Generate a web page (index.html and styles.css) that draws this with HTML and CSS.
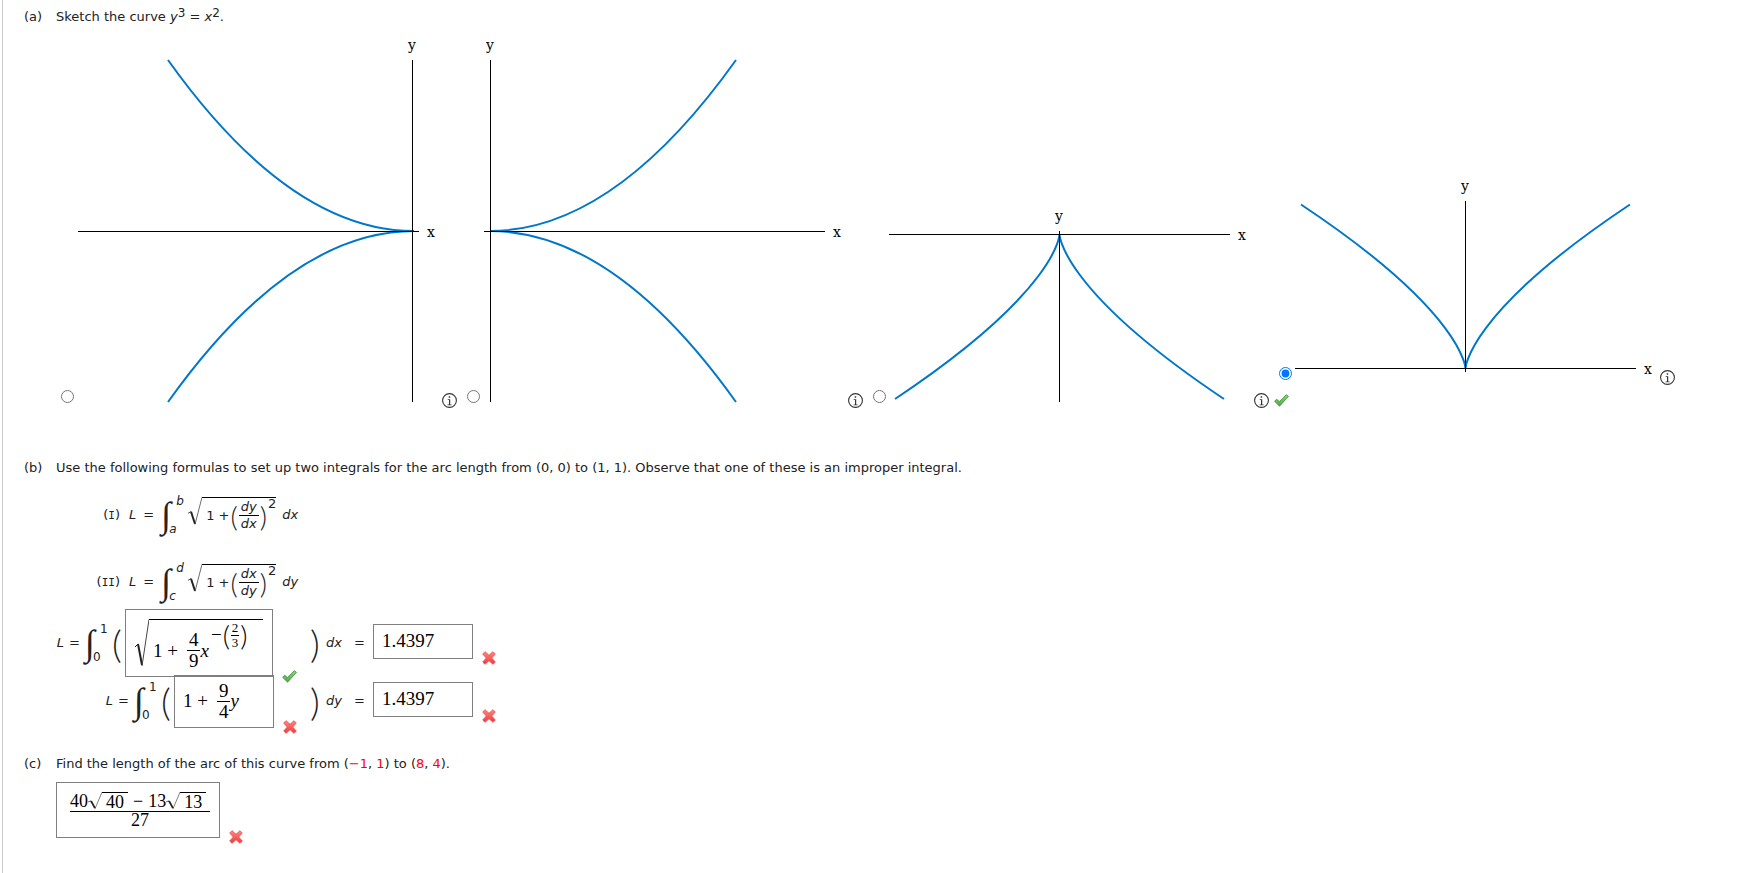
FILE: index.html
```html
<!DOCTYPE html>
<html lang="en">
<head>
    <meta charset="UTF-8">
    <meta name="viewport" content="width=device-width, initial-scale=1.0">
    <title>Arc Length</title>
    <link rel="stylesheet" href="styles.css">
</head>
<body>
    <!-- Shared icons -->
    <svg class="defs" width="0" height="0" aria-hidden="true">
        <defs>
            <linearGradient id="green" x1="0" y1="0" x2="0" y2="1">
                <stop offset="0" stop-color="#8fd47f"/>
                <stop offset="1" stop-color="#4fa548"/>
            </linearGradient>
            <linearGradient id="red" x1="0" y1="0" x2="0" y2="1">
                <stop offset="0" stop-color="#ff8a80"/>
                <stop offset="1" stop-color="#f0383c"/>
            </linearGradient>
        </defs>
        <symbol id="info" viewBox="0 0 15 15">
            <circle cx="7.5" cy="7.5" r="6.900" fill="none" stroke="#333" stroke-width="1.100"/>
            <path d="M6.700 3.200h1.500v1.600H6.700zM5.700 6.200h2.500v5.200h1.400v.8H5.600v-.8h1.400V7H5.700z" fill="#333"/>
        </symbol>
        <symbol id="check" viewBox="0 0 15 13">
            <path d="M.6 7.300 2.700 5.200 5.400 7.500 12.300.7 14.500 2.300 5.600 12.200z" fill="url(#green)" stroke="#3c8f38" stroke-width=".8" stroke-linejoin="round"/>
        </symbol>
        <symbol id="cross" viewBox="0 0 14 14">
            <path d="M3 .7 7 4.300 11 .7 13.300 3 9.700 7 13.300 11 11 13.300 7 9.700 3 13.300 .7 11 4.300 7 .7 3z" fill="url(#red)" stroke="#e8484a" stroke-width=".8" stroke-linejoin="round"/>
        </symbol>
        <symbol id="root" viewBox="0 0 14 48" preserveAspectRatio="none">
            <path d="M0 28 3 25" fill="none" stroke="#222" stroke-width="1"/>
            <path d="M3 25 7 46" fill="none" stroke="#222" stroke-width="2"/>
            <path d="M7 47 14 .5" fill="none" stroke="#444" stroke-width="1"/>
        </symbol>
    </svg>

    <main class="question">
        <section class="part">
            <span class="part-label">(a)</span>
            <div class="part-body">
                <p>Sketch the curve <i>y</i><sup>3</sup> = <i>x</i><sup>2</sup>.</p>

                <div class="choices">
                    <div class="choice">
                        <div class="choice-row">
                            <input type="radio" name="curve" id="curve1" aria-label="Curve opening left">
                            <label for="curve1">
                                <svg class="graph" width="361" height="364">
                                    <path class="curve" d="M90 22Q212 193 336 193Q212 193 90 364"/>
                                    <path class="axis" d="M0 193.500H341M334.500 22V364"/>
                                    <text x="330" y="12">y</text>
                                    <text x="349" y="199">x</text>
                                </svg>
                            </label>
                            <a class="info" href="#" aria-label="Graph description"><svg width="15" height="15"><use href="#info"/></svg></a>
                        </div>
                    </div>

                    <div class="choice">
                        <div class="choice-row">
                            <input type="radio" name="curve" id="curve2" aria-label="Curve opening right">
                            <label for="curve2">
                                <svg class="graph" width="361" height="364">
                                    <path class="curve" d="M252 22Q130 193 6 193Q130 193 252 364"/>
                                    <path class="axis" d="M0 193.500H341M6.500 22V364"/>
                                    <text x="2" y="12">y</text>
                                    <text x="349" y="199">x</text>
                                </svg>
                            </label>
                            <a class="info" href="#" aria-label="Graph description"><svg width="15" height="15"><use href="#info"/></svg></a>
                        </div>
                    </div>

                    <div class="choice">
                        <div class="choice-row">
                            <input type="radio" name="curve" id="curve3" aria-label="Curve opening down">
                            <label for="curve3">
                                <svg class="graph" width="361" height="196">
                                    <path class="curve" d="M5 193C169.500 83 169.500 28 169.500 28C169.500 28 169.500 83 334 193"/>
                                    <path class="axis" d="M-1 28.500H340M169.500 25V196"/>
                                    <text x="165" y="15">y</text>
                                    <text x="348" y="34">x</text>
                                </svg>
                            </label>
                            <a class="info" href="#" aria-label="Graph description"><svg width="15" height="15"><use href="#info"/></svg></a>
                        </div>
                    </div>

                    <div class="choice">
                        <div class="choice-row">
                            <input type="radio" name="curve" id="curve4" aria-label="Curve opening up" checked>
                            <label for="curve4">
                                <svg class="graph" width="361" height="203">
                                    <path class="curve" d="M5 28.500C169.500 138 169.500 193 169.500 193C169.500 193 169.500 138 334 28.500"/>
                                    <path class="axis" d="M-1 192.500H340M169.500 25V196"/>
                                    <text x="165" y="15">y</text>
                                    <text x="348" y="198">x</text>
                                </svg>
                            </label>
                            <a class="info" href="#" aria-label="Graph description"><svg width="15" height="15"><use href="#info"/></svg></a>
                        </div>
                        <div class="choice-mark"><svg width="15" height="13" role="img" aria-label="Correct"><use href="#check"/></svg></div>
                    </div>
                </div>
            </div>
        </section>

        <section class="part part-b">
            <span class="part-label">(b)</span>
            <div class="part-body">
                <p>Use the following formulas to set up two integrals for the arc length from (0, 0) to (1, 1). Observe that one of these is an improper integral.</p>

                <div class="formulas">
                    <div class="formula">
                        <span class="formula-label">(<span class="roman">I</span>)</span>
                        <i>L</i><span class="eq">=</span>
                        <span class="integral"><span class="int-sign">∫</span><span class="limits"><i>b</i><i>a</i></span></span>
                        <svg class="root" width="14" height="28"><use href="#root"/></svg>
                        <span class="radicand">
                            <span>1 +</span>
                            <span class="paren">(</span>
                            <span class="frac"><i>dy</i><i>dx</i></span>
                            <span class="paren">)</span>
                            <span class="exp">2</span>
                        </span>
                        <i>dx</i>
                    </div>
                    <div class="formula">
                        <span class="formula-label">(<span class="roman">II</span>)</span>
                        <i>L</i><span class="eq">=</span>
                        <span class="integral"><span class="int-sign">∫</span><span class="limits"><i>d</i><i>c</i></span></span>
                        <svg class="root" width="14" height="28"><use href="#root"/></svg>
                        <span class="radicand">
                            <span>1 +</span>
                            <span class="paren">(</span>
                            <span class="frac"><i>dx</i><i>dy</i></span>
                            <span class="paren">)</span>
                            <span class="exp">2</span>
                        </span>
                        <i>dy</i>
                    </div>
                </div>

                <div class="answers">
                    <div class="answer-row">
                        <div class="integrand">
                            <i>L</i><span class="eq">=</span>
                            <span class="integral"><span class="int-sign">∫</span><span class="limits"><span>1</span><span>0</span></span></span>
                            <span class="paren paren-big">(</span>
                            <div class="mathpad mathpad-tall" role="textbox" tabindex="0" aria-label="Integrand in x">
                                <svg class="root" width="14" height="48"><use href="#root"/></svg>
                                <span class="radicand radicand-tall">
                                    <span class="base">
                                        <span>1 +</span>
                                        <span class="frac frac-tex"><span>4</span><span>9</span></span>
                                        <i>x</i>
                                    </span>
                                    <span class="power">
                                        <span>−</span>
                                        <span class="paren">(</span>
                                        <span class="frac frac-small"><span>2</span><span>3</span></span>
                                        <span class="paren">)</span>
                                    </span>
                                </span>
                            </div>
                            <svg class="mark" width="15" height="13" role="img" aria-label="Correct"><use href="#check"/></svg>
                        </div>
                        <span class="paren paren-big">)</span>
                        <i class="dvar">dx</i>
                        <label for="value1">=</label>
                        <input class="value" id="value1" type="text" value="1.4397">
                        <svg class="mark mark-value" width="14" height="14" role="img" aria-label="Incorrect"><use href="#cross"/></svg>
                    </div>
                    <div class="answer-row">
                        <div class="integrand">
                            <i>L</i><span class="eq">=</span>
                            <span class="integral"><span class="int-sign">∫</span><span class="limits"><span>1</span><span>0</span></span></span>
                            <span class="paren paren-big">(</span>
                            <div class="mathpad mathpad-short" role="textbox" tabindex="0" aria-label="Integrand in y">
                                <span>1 +</span>
                                <span class="frac frac-tex"><span>9</span><span>4</span></span>
                                <i>y</i>
                            </div>
                            <svg class="mark" width="14" height="14" role="img" aria-label="Incorrect"><use href="#cross"/></svg>
                        </div>
                        <span class="paren paren-big">)</span>
                        <i class="dvar">dy</i>
                        <label for="value2">=</label>
                        <input class="value" id="value2" type="text" value="1.4397">
                        <svg class="mark mark-value" width="14" height="14" role="img" aria-label="Incorrect"><use href="#cross"/></svg>
                    </div>
                </div>
            </div>
        </section>

        <section class="part part-c">
            <span class="part-label">(c)</span>
            <div class="part-body">
                <p>Find the length of the arc of this curve from (<span class="num">−1</span>, <span class="num">1</span>) to (<span class="num">8</span>, <span class="num">4</span>).</p>
                <div class="final">
                    <div class="mathpad mathpad-final" role="textbox" tabindex="0" aria-label="Arc length">
                        <span class="frac frac-wide">
                            <span class="top">40<svg class="root" width="14" height="17"><use href="#root"/></svg><span class="over">40</span><span class="minus">−</span>13<svg class="root" width="14" height="17"><use href="#root"/></svg><span class="over">13</span></span>
                            <span>27</span>
                        </span>
                    </div>
                    <svg class="mark" width="14" height="14" role="img" aria-label="Incorrect"><use href="#cross"/></svg>
                </div>
            </div>
        </section>
    </main>
</body>
</html>
```
FILE: styles.css
```css
* {
    box-sizing: border-box;
}
body {
    margin: 0;
    background-color: #fff;
    color: #222;
    font-family: Verdana, "DejaVu Sans", sans-serif;
    font-size: 13px;
    line-height: 16px;
}
.defs {
    position: absolute;
}
svg {
    display: block;
    flex: none;
}
p {
    margin: 0;
}
sup {
    font-size: 12px;
    line-height: 0;
    vertical-align: 4px;
}
.question {
    min-height: 100vh;
    margin-left: 2px;
    padding: 9px 0 24px 21px;
    border-left: 1px solid #ccc;
}
.part {
    display: grid;
    grid-template-columns: 32px 1fr;
}
.part-b {
    margin-top: 52px;
}
.part-c {
    margin-top: 26px;
}
.num {
    color: #f00;
}

/* Graph choices */
.choices {
    display: flex;
    flex-wrap: wrap;
    align-items: flex-end;
    gap: 5px;
    margin-top: 13px;
}
.choice-row {
    display: flex;
    align-items: flex-end;
    gap: 3px;
    padding-left: 5px;
}
.choice-row input {
    width: 13px;
    height: 13px;
    margin: 0 1px 5px 0;
}
.graph {
    margin-bottom: 6px;
    overflow: visible;
}
.graph text {
    font-family: "DejaVu Serif", serif;
    font-size: 14px;
    fill: #000;
}
.axis {
    fill: none;
    stroke: #000;
    stroke-width: 1;
}
.curve {
    fill: none;
    stroke: #0077c8;
    stroke-width: 2;
}
.choice-mark {
    display: flex;
    align-items: flex-end;
    height: 22px;
    margin-bottom: 1px;
}

/* Formulas */
.formulas {
    display: flex;
    flex-direction: column;
    gap: 27px;
    margin-top: 19px;
}
.formula {
    display: flex;
    align-items: center;
    height: 40px;
}
.formula .root {
    align-self: flex-start;
    margin-top: 2px;
}
.formula-label {
    width: 64px;
    margin-right: 9px;
    text-align: right;
}
.roman {
    font-family: "DejaVu Sans Mono", monospace;
    font-size: 11px;
}
.eq {
    margin: 0 7px;
}
.integral {
    display: flex;
    height: 40px;
}
.int-sign {
    width: 15px;
    font-family: "Liberation Serif", serif;
    font-size: 36px;
    line-height: 40px;
}
.limits {
    display: flex;
    flex-direction: column;
    justify-content: space-between;
    width: 12px;
    font-size: 12px;
    line-height: 12px;
}
.limits > :last-child {
    margin-left: -7px;
}
.radicand {
    display: flex;
    align-items: center;
    height: 36px;
    margin-right: 6px;
    padding-left: 4px;
    border-top: 1px solid #000;
}
.paren {
    margin: 0 1px;
    font-family: Lato, sans-serif;
    font-size: 28px;
    font-weight: 300;
    line-height: 30px;
}
.paren-big {
    width: 13px;
    margin: 0;
    font-size: 38px;
    line-height: 40px;
}
.exp {
    align-self: flex-start;
    line-height: 12px;
}
.frac {
    display: flex;
    flex-direction: column;
    text-align: center;
}
.frac > :first-child {
    border-bottom: 1px solid #000;
}
.frac > i {
    padding: 0 2px;
}

/* Answer boxes */
.answers {
    margin-top: 12px;
}
.answer-row {
    display: flex;
    align-items: center;
    height: 58px;
}
.integrand {
    display: flex;
    align-items: center;
    justify-content: flex-end;
    width: 241px;
    margin-right: 13px;
}
.integrand .eq {
    margin: 0 5px;
}
.mathpad {
    display: flex;
    align-items: center;
    border: 1px solid #7f7f7f;
    color: #000;
    font-family: "Liberation Serif", serif;
    font-size: 19px;
}
.mathpad-tall {
    width: 148px;
    height: 68px;
    padding: 0 9px;
}
.mathpad-short {
    width: 100px;
    height: 53px;
    padding-left: 8px;
}
.mathpad-final {
    width: 164px;
    height: 56px;
    padding: 0 9px 0 13px;
    font-size: 18px;
}
.radicand-tall {
    flex: 1;
    align-items: flex-start;
    height: 48px;
    margin: 0;
}
.base {
    display: flex;
    align-items: center;
    margin-top: 10px;
}
.frac-tex {
    margin-left: 9px;
    line-height: 20px;
}
.frac-tex > span {
    padding: 0 2px;
}
.power {
    display: flex;
    align-items: center;
    height: 30px;
    margin-left: 2px;
}
.frac-small {
    font-size: 13px;
    line-height: 14px;
}
.frac-small > span {
    padding: 0 1px;
}
.dvar {
    width: 28px;
    margin-left: 3px;
}
.value {
    width: 100px;
    height: 35px;
    margin: 0 0 4px 8px;
    padding: 0 8px;
    border: 1px solid #7f7f7f;
    color: #000;
    font-family: "Liberation Serif", serif;
    font-size: 19px;
}
.mark {
    align-self: flex-end;
    margin: 0 0 -6px 9px;
}
.mark-value {
    margin: 0 0 7px 9px;
}
.final {
    display: flex;
    margin-top: 10px;
}
.frac-wide {
    width: 140px;
}
.top {
    display: flex;
    line-height: 18px;
}
.over {
    padding: 0 4px;
    border-top: 1px solid #000;
}
.minus {
    margin: 0 5px;
}
```
